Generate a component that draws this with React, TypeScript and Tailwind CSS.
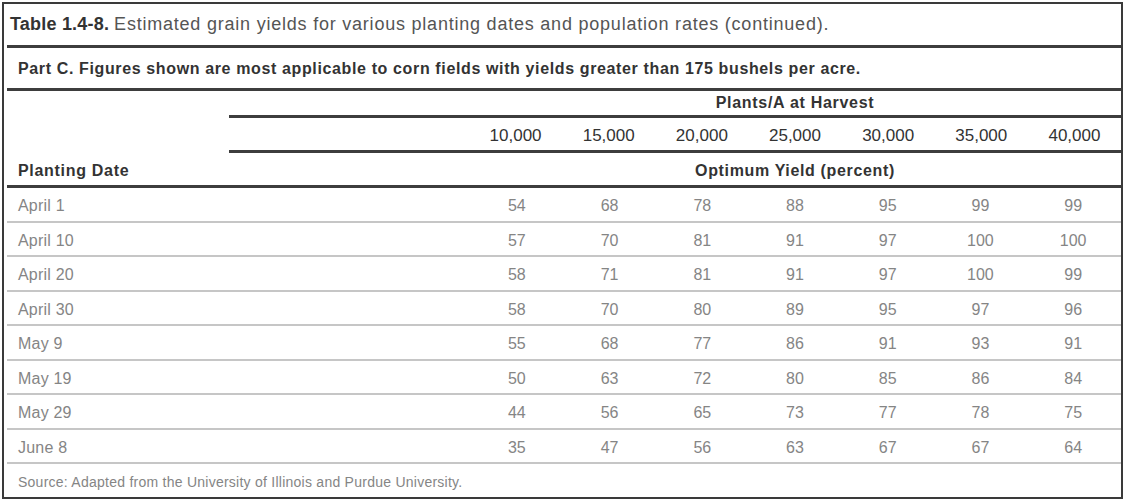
import React from "react";

const cols = ["10,000", "15,000", "20,000", "25,000", "30,000", "35,000", "40,000"];
const rows: [string, number[]][] = [
  ["April 1", [54, 68, 78, 88, 95, 99, 99]],
  ["April 10", [57, 70, 81, 91, 97, 100, 100]],
  ["April 20", [58, 71, 81, 91, 97, 100, 99]],
  ["April 30", [58, 70, 80, 89, 95, 97, 96]],
  ["May 9", [55, 68, 77, 86, 91, 93, 91]],
  ["May 19", [50, 63, 72, 80, 85, 86, 84]],
  ["May 29", [44, 56, 65, 73, 77, 78, 75]],
  ["June 8", [35, 47, 56, 63, 67, 67, 64]],
];

export default function App() {
  return (
    <div className="w-[1125px] h-[500px] bg-white pt-[2px] pl-[2px] font-['Liberation_Sans',Arial,sans-serif]">
      <div className="w-[1121px] h-[497px] border-2 border-[#3a3a3a] flex flex-col">
        <div className="h-[41px] flex items-center pl-[6px] text-[18px] text-[#555]">
          <span className="font-bold text-[#333] mr-[5px] tracking-[0.2px]">Table 1.4-8.</span>
          <span className="tracking-[0.78px]">
            Estimated grain yields for various planting dates and population rates (continued).
          </span>
        </div>
        <div className="h-[3px] ml-[3px] bg-[#3d3d3d]" />
        <div className="h-[40px] flex items-center pl-[14px] pt-[1px] text-[16px] font-bold text-[#333] tracking-[0.63px]">
          Part C. Figures shown are most applicable to corn fields with yields greater than 175 bushels per acre.
        </div>
        <div className="h-[3px] ml-[3px] bg-[#3d3d3d]" />
        <div className="h-[24px] grid grid-cols-[465px_1fr] items-center pb-[5px]">
          <div />
          <div className="text-center text-[16px] font-bold text-[#333] tracking-[0.7px]">Plants/A at Harvest</div>
        </div>
        <div className="h-[3px] ml-[225px] bg-[#3d3d3d]" />
        <div className="h-[32px] grid grid-cols-[465px_repeat(7,1fr)] items-center pt-[3px]">
          <div />
          {cols.map((c) => (
            <div key={c} className="text-center text-[17px] text-[#333]">
              {c}
            </div>
          ))}
        </div>
        <div className="h-[3px] ml-[225px] bg-[#3d3d3d]" />
        <div className="h-[32px] grid grid-cols-[465px_1fr] items-center pt-[4px]">
          <div className="pl-[14px] text-[16px] font-bold text-[#333] tracking-[0.7px]">Planting Date</div>
          <div className="text-center text-[16px] font-bold text-[#333] tracking-[0.65px]">
            Optimum Yield (percent)
          </div>
        </div>
        <div className="h-[3px] ml-[3px] bg-[#3d3d3d]" />
        {rows.map(([label, vals]) => (
          <div
            key={label}
            className="h-[34.5px] grid grid-cols-[465px_repeat(7,1fr)] items-center pt-[4px] border-b-2 border-[#c6c6c6] ml-[3px] text-[16px] text-[#858585]"
          >
            <div className="pl-[11px] tracking-[0.2px]">{label}</div>
            {vals.map((v, i) => (
              <div key={i} className="text-center -ml-[3px]">
                {v}
              </div>
            ))}
          </div>
        ))}
        <div className="flex-1 flex items-center pl-[14px] pt-[3px] text-[14px] text-[#858585] tracking-[0.25px]">
          Source: Adapted from the University of Illinois and Purdue University.
        </div>
      </div>
    </div>
  );
}
